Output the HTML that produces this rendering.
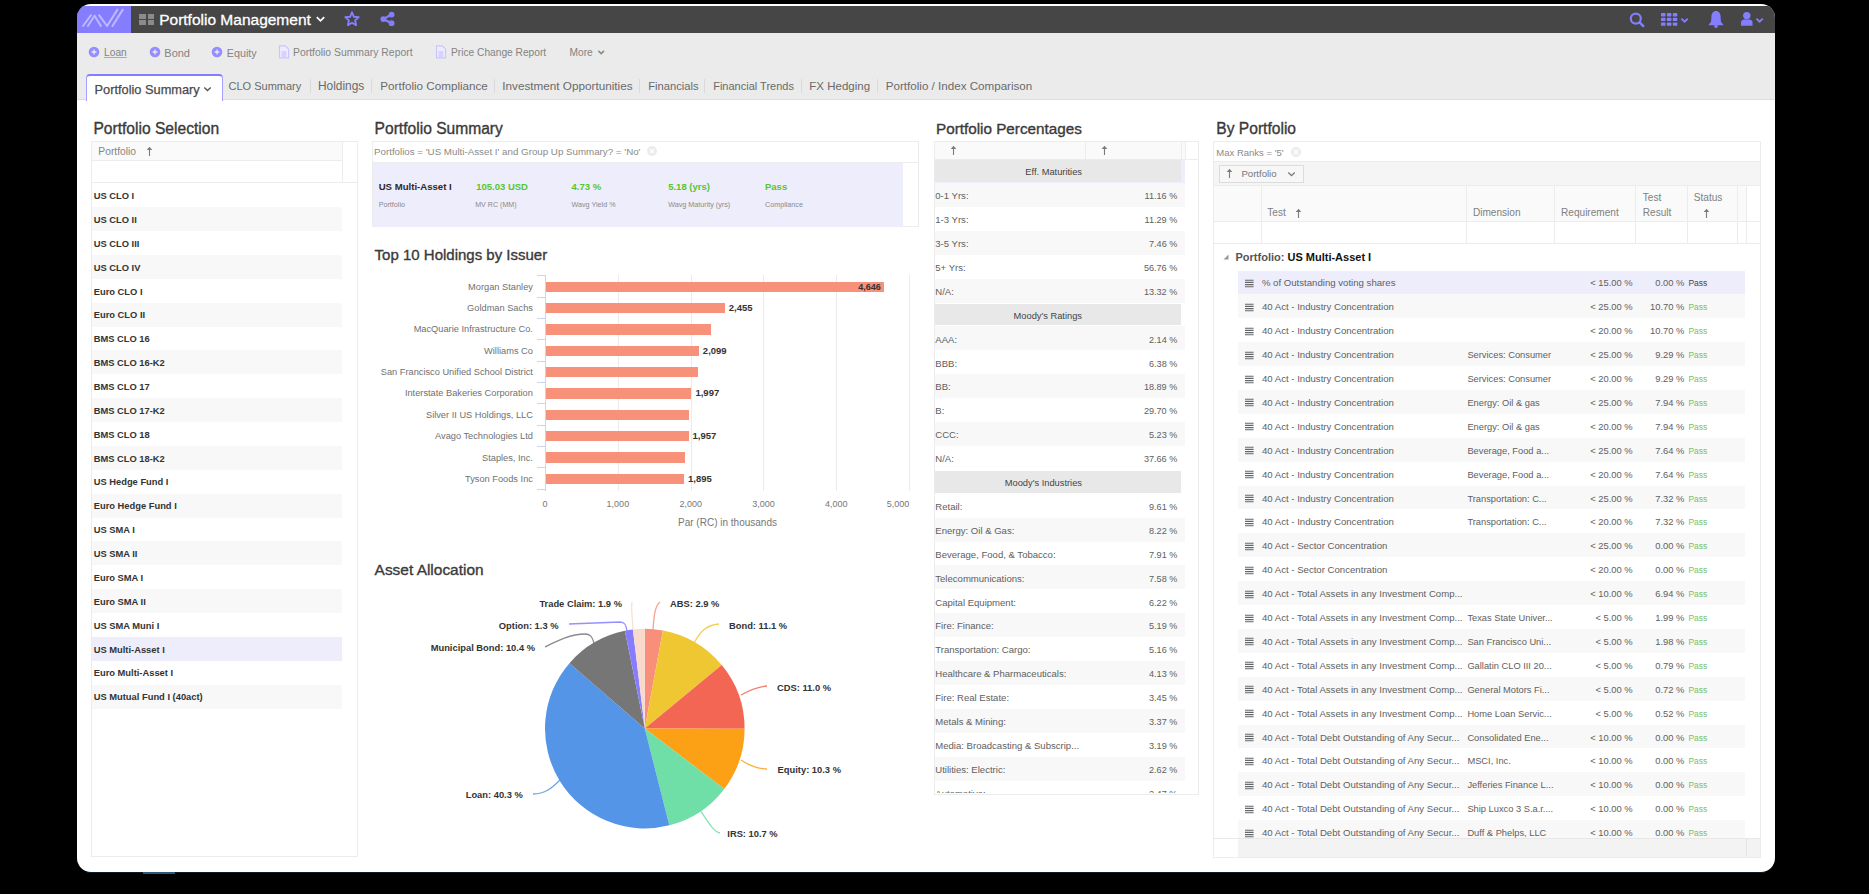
<!DOCTYPE html>
<html><head><meta charset="utf-8"><style>
html,body{margin:0;padding:0;}
body{width:1869px;height:894px;background:#000;position:relative;overflow:hidden;font-family:"Liberation Sans", sans-serif;}
#win{position:absolute;left:77px;top:4px;width:1698px;height:868px;border-radius:14px;background:#fff;overflow:hidden;}
#win div{position:absolute;}
.t{white-space:nowrap;line-height:20px;height:20px;}
</style></head><body>
<div style="position:absolute;left:87px;top:872px;width:1678px;height:1px;background:#0d1c26;"></div><div style="position:absolute;left:143px;top:872px;width:32px;height:1.5px;background:#2a5a78;"></div>
<div id="win"><div style="left:-77px;top:-4px;width:1869px;height:894px;">
<div style="left:77.00px;top:6.00px;width:1698.00px;height:26.70px;background:#464646;"></div>
<div style="left:77.00px;top:6.00px;width:53.60px;height:26.70px;background:#847dfe;"></div>
<svg style="position:absolute;left:77.00px;top:4.00px;" width="54" height="29" viewBox="0 0 54 29"><g stroke="#bdb8ff" stroke-width="2" fill="none" stroke-linecap="round" stroke-linejoin="round"><path d="M6 22 L14 11.2"/><path d="M10.9 22 L17.6 11.7 L23.9 22"/><path d="M22.1 11.2 L30.1 22 L40.4 5.6"/><path d="M35.5 22 L45.8 5.6"/></g></svg>
<div style="left:139.30px;top:13.70px;width:6.60px;height:5.00px;background:#8b8b8b;"></div>
<div style="left:139.30px;top:19.90px;width:6.60px;height:5.00px;background:#8b8b8b;"></div>
<div style="left:147.50px;top:13.70px;width:6.60px;height:5.00px;background:#8b8b8b;"></div>
<div style="left:147.50px;top:19.90px;width:6.60px;height:5.00px;background:#8b8b8b;"></div>
<div class="t" style="left:159.20px;top:9.60px;font-size:15.5px;color:#ffffff;font-weight:normal;-webkit-text-stroke:0.3px #fff;">Portfolio Management</div>
<svg style="position:absolute;left:315.00px;top:15.00px;" width="11" height="8" viewBox="0 0 11 8"><path d="M1.8 2.2 L5.5 5.8 L9.2 2.2" stroke="#fff" stroke-width="1.8" fill="none"/></svg>
<svg style="position:absolute;left:343.00px;top:10.00px;" width="18" height="18" viewBox="0 0 18 18"><path d="M9 2.3 L10.9 6.8 L15.7 7.2 L12.1 10.4 L13.1 15.1 L9 12.7 L4.9 15.1 L5.9 10.4 L2.3 7.2 L7.1 6.8 Z" stroke="#847dfe" stroke-width="1.9" fill="none" stroke-linejoin="round"/></svg>
<svg style="position:absolute;left:380.00px;top:11.00px;" width="17" height="17" viewBox="0 0 17 17"><g fill="#847dfe"><circle cx="11.6" cy="3.6" r="2.9"/><circle cx="11.6" cy="12.2" r="2.9"/><circle cx="3.3" cy="8.1" r="2.9"/></g><path d="M11.6 3.6 L3.3 8.1 L11.6 12.2" stroke="#847dfe" stroke-width="2.3" fill="none"/></svg>
<svg style="position:absolute;left:1627.00px;top:11.00px;" width="19" height="19" viewBox="0 0 19 19"><circle cx="8.8" cy="7.6" r="5.0" stroke="#847dfe" stroke-width="2.2" fill="none"/><path d="M12.6 11.4 L16.3 15.1" stroke="#847dfe" stroke-width="2.4" stroke-linecap="round"/></svg>
<svg style="position:absolute;left:1661.00px;top:13.20px;" width="17" height="14" viewBox="0 0 17 14"><g fill="#847dfe"><rect x="0.0" y="0.0" width="4.5" height="3.4" rx="0.9"/><rect x="0.0" y="4.7" width="4.5" height="3.4" rx="0.9"/><rect x="0.0" y="9.4" width="4.5" height="3.4" rx="0.9"/><rect x="5.9" y="0.0" width="4.5" height="3.4" rx="0.9"/><rect x="5.9" y="4.7" width="4.5" height="3.4" rx="0.9"/><rect x="5.9" y="9.4" width="4.5" height="3.4" rx="0.9"/><rect x="11.8" y="0.0" width="4.5" height="3.4" rx="0.9"/><rect x="11.8" y="4.7" width="4.5" height="3.4" rx="0.9"/><rect x="11.8" y="9.4" width="4.5" height="3.4" rx="0.9"/></g></svg>
<svg style="position:absolute;left:1679.80px;top:16.60px;" width="10" height="7" viewBox="0 0 10 7"><path d="M1.4 1.6 L4.6 4.6 L7.8 1.6" stroke="#847dfe" stroke-width="1.9" fill="none"/></svg>
<svg style="position:absolute;left:1707.00px;top:10.00px;" width="18" height="19" viewBox="0 0 18 19"><path d="M9 1.1 C6 1.1 4.6 3.6 4.4 6.5 L4.2 10.6 C4 12.2 2.9 13.4 1.8 14.4 L1.8 15.3 H16.2 V14.4 C15.1 13.4 14 12.2 13.8 10.6 L13.6 6.5 C13.4 3.6 12 1.1 9 1.1 Z" fill="#847dfe"/><circle cx="9" cy="16.3" r="1.7" fill="#847dfe"/></svg>
<svg style="position:absolute;left:1740.00px;top:11.00px;" width="15" height="17" viewBox="0 0 15 17"><circle cx="6.8" cy="4.6" r="3.7" fill="#847dfe"/><path d="M1 14.7 V11.4 C1 9.5 2.5 8.4 4.3 8.4 H9.3 C11.1 8.4 12.5 9.5 12.5 11.4 V14.7 Z" fill="#847dfe"/></svg>
<svg style="position:absolute;left:1755.00px;top:16.60px;" width="10" height="7" viewBox="0 0 10 7"><path d="M1.4 1.6 L4.6 4.6 L7.8 1.6" stroke="#847dfe" stroke-width="1.9" fill="none"/></svg>
<div style="left:77.00px;top:32.70px;width:1698.00px;height:67.30px;background:#ebebeb;"></div>
<div style="left:77.00px;top:99.20px;width:1698.00px;height:1.00px;background:#dcdcdc;"></div>
<svg style="position:absolute;left:88.30px;top:45.70px;" width="12" height="12" viewBox="0 0 12 12"><circle cx="6" cy="6" r="5.3" fill="#948dff"/><path d="M6 3.6 V8.4 M3.6 6 H8.4" stroke="#ececec" stroke-width="1.3"/></svg>
<div class="t" style="left:104.10px;top:42.80px;font-size:10.2px;color:#838383;font-weight:normal;text-decoration:underline;text-decoration-color:#aaa;">Loan</div>
<svg style="position:absolute;left:148.50px;top:45.70px;" width="12" height="12" viewBox="0 0 12 12"><circle cx="6" cy="6" r="5.3" fill="#948dff"/><path d="M6 3.6 V8.4 M3.6 6 H8.4" stroke="#ececec" stroke-width="1.3"/></svg>
<div class="t" style="left:164.30px;top:42.80px;font-size:11.0px;color:#838383;font-weight:normal;">Bond</div>
<svg style="position:absolute;left:210.80px;top:45.70px;" width="12" height="12" viewBox="0 0 12 12"><circle cx="6" cy="6" r="5.3" fill="#948dff"/><path d="M6 3.6 V8.4 M3.6 6 H8.4" stroke="#ececec" stroke-width="1.3"/></svg>
<div class="t" style="left:226.70px;top:42.80px;font-size:10.8px;color:#838383;font-weight:normal;">Equity</div>
<svg style="position:absolute;left:278.00px;top:44.70px;" width="12" height="14" viewBox="0 0 12 14"><path d="M1.5 0.9 H7.3 L10.6 4.2 V12.9 H1.5 Z" stroke="#c9c5ff" stroke-width="1.1" fill="#eeebff"/><path d="M3.6 7 H8.4 M3.6 9 H8.4 M3.6 11 H8.4" stroke="#b9b4ff" stroke-width="0.9"/></svg>
<div class="t" style="left:293.00px;top:42.80px;font-size:10.4px;color:#838383;font-weight:normal;">Portfolio Summary Report</div>
<svg style="position:absolute;left:435.20px;top:44.70px;" width="12" height="14" viewBox="0 0 12 14"><path d="M1.5 0.9 H7.3 L10.6 4.2 V12.9 H1.5 Z" stroke="#c9c5ff" stroke-width="1.1" fill="#eeebff"/><path d="M3.6 7 H8.4 M3.6 9 H8.4 M3.6 11 H8.4" stroke="#b9b4ff" stroke-width="0.9"/></svg>
<div class="t" style="left:451.00px;top:42.80px;font-size:10.2px;color:#838383;font-weight:normal;">Price Change Report</div>
<div class="t" style="left:569.50px;top:42.80px;font-size:10.2px;color:#838383;font-weight:normal;">More</div>
<svg style="position:absolute;left:596.80px;top:48.50px;" width="9" height="7" viewBox="0 0 9 7"><path d="M1.4 1.9 L4.2 4.6 L7 1.9" stroke="#8a8a8a" stroke-width="1.6" fill="none"/></svg>
<div style="left:86.00px;top:73.60px;width:136.50px;height:27.00px;background:#ffffff;border:1.3px solid #a59fff;border-top:2.2px solid #847dfe;border-bottom:none;border-radius:4px 4px 0 0;box-sizing:border-box;"></div>
<div class="t" style="left:94.50px;top:79.60px;font-size:12.8px;color:#4a4a4a;font-weight:normal;-webkit-text-stroke:0.25px #4a4a4a;">Portfolio Summary</div>
<svg style="position:absolute;left:203.00px;top:86.00px;" width="10" height="7" viewBox="0 0 10 7"><path d="M1.3 1.5 L4.5 4.6 L7.7 1.5" stroke="#555" stroke-width="1.4" fill="none"/></svg>
<div class="t" style="left:228.50px;top:76.30px;font-size:11.0px;color:#6a6a6a;font-weight:normal;">CLO Summary</div>
<div class="t" style="left:318.00px;top:76.30px;font-size:11.9px;color:#6a6a6a;font-weight:normal;">Holdings</div>
<div class="t" style="left:380.30px;top:76.30px;font-size:11.66px;color:#6a6a6a;font-weight:normal;">Portfolio Compliance</div>
<div class="t" style="left:502.30px;top:76.30px;font-size:11.72px;color:#6a6a6a;font-weight:normal;">Investment Opportunities</div>
<div class="t" style="left:648.20px;top:76.30px;font-size:11.2px;color:#6a6a6a;font-weight:normal;">Financials</div>
<div class="t" style="left:713.20px;top:76.30px;font-size:11.0px;color:#6a6a6a;font-weight:normal;">Financial Trends</div>
<div class="t" style="left:809.30px;top:76.30px;font-size:11.5px;color:#6a6a6a;font-weight:normal;">FX Hedging</div>
<div class="t" style="left:885.80px;top:76.30px;font-size:11.62px;color:#6a6a6a;font-weight:normal;">Portfolio / Index Comparison</div>
<div style="left:309.50px;top:79.00px;width:1.00px;height:14.00px;background:#dadada;"></div>
<div style="left:371.30px;top:79.00px;width:1.00px;height:14.00px;background:#dadada;"></div>
<div style="left:494.20px;top:79.00px;width:1.00px;height:14.00px;background:#dadada;"></div>
<div style="left:639.30px;top:79.00px;width:1.00px;height:14.00px;background:#dadada;"></div>
<div style="left:704.20px;top:79.00px;width:1.00px;height:14.00px;background:#dadada;"></div>
<div style="left:801.00px;top:79.00px;width:1.00px;height:14.00px;background:#dadada;"></div>
<div style="left:876.80px;top:79.00px;width:1.00px;height:14.00px;background:#dadada;"></div>
<div class="t" style="left:93.40px;top:119.00px;font-size:15.6px;color:#3a3a3a;font-weight:normal;-webkit-text-stroke:0.35px #3a3a3a;">Portfolio Selection</div>
<div class="t" style="left:374.60px;top:119.00px;font-size:15.6px;color:#3a3a3a;font-weight:normal;-webkit-text-stroke:0.35px #3a3a3a;">Portfolio Summary</div>
<div class="t" style="left:936.00px;top:119.00px;font-size:15.25px;color:#3a3a3a;font-weight:normal;-webkit-text-stroke:0.35px #3a3a3a;">Portfolio Percentages</div>
<div class="t" style="left:1216.30px;top:119.00px;font-size:15.6px;color:#3a3a3a;font-weight:normal;-webkit-text-stroke:0.35px #3a3a3a;">By Portfolio</div>
<div style="left:91.30px;top:141.00px;width:266.50px;height:716.00px;background:#fff;border:1px solid #ececec;box-sizing:border-box;"></div>
<div style="left:92.30px;top:142.00px;width:249.50px;height:18.00px;background:#fafafa;"></div>
<div style="left:92.30px;top:159.50px;width:249.50px;height:1.00px;background:#ececec;"></div>
<div style="left:341.80px;top:142.00px;width:1.00px;height:40.50px;background:#ececec;"></div>
<div style="left:92.30px;top:182.20px;width:265.00px;height:1.00px;background:#ececec;"></div>
<div class="t" style="left:98.30px;top:142.20px;font-size:10.3px;color:#858585;font-weight:normal;">Portfolio</div>
<svg style="position:absolute;left:144.50px;top:145.00px;" width="9" height="12" viewBox="0 0 9 12"><path d="M4.5 3 V11" stroke="#7a7a7a" stroke-width="1.1" fill="none"/><path d="M1.7 4.9 L4.5 1.8 L7.3 4.9 Z" fill="#7a7a7a"/></svg>
<div class="t" style="left:93.70px;top:186.03px;font-size:9.35px;color:#333;font-weight:bold;">US CLO I</div>
<div style="left:92.00px;top:207.27px;width:249.80px;height:23.87px;background:#f8f8f8;"></div>
<div class="t" style="left:93.70px;top:209.91px;font-size:9.35px;color:#333;font-weight:bold;">US CLO II</div>
<div class="t" style="left:93.70px;top:233.78px;font-size:9.35px;color:#333;font-weight:bold;">US CLO III</div>
<div style="left:92.00px;top:255.01px;width:249.80px;height:23.87px;background:#f8f8f8;"></div>
<div class="t" style="left:93.70px;top:257.64px;font-size:9.35px;color:#333;font-weight:bold;">US CLO IV</div>
<div class="t" style="left:93.70px;top:281.51px;font-size:9.35px;color:#333;font-weight:bold;">Euro CLO I</div>
<div style="left:92.00px;top:302.75px;width:249.80px;height:23.87px;background:#f8f8f8;"></div>
<div class="t" style="left:93.70px;top:305.38px;font-size:9.35px;color:#333;font-weight:bold;">Euro CLO II</div>
<div class="t" style="left:93.70px;top:329.25px;font-size:9.35px;color:#333;font-weight:bold;">BMS CLO 16</div>
<div style="left:92.00px;top:350.49px;width:249.80px;height:23.87px;background:#f8f8f8;"></div>
<div class="t" style="left:93.70px;top:353.12px;font-size:9.35px;color:#333;font-weight:bold;">BMS CLO 16-K2</div>
<div class="t" style="left:93.70px;top:377.00px;font-size:9.35px;color:#333;font-weight:bold;">BMS CLO 17</div>
<div style="left:92.00px;top:398.23px;width:249.80px;height:23.87px;background:#f8f8f8;"></div>
<div class="t" style="left:93.70px;top:400.87px;font-size:9.35px;color:#333;font-weight:bold;">BMS CLO 17-K2</div>
<div class="t" style="left:93.70px;top:424.74px;font-size:9.35px;color:#333;font-weight:bold;">BMS CLO 18</div>
<div style="left:92.00px;top:445.97px;width:249.80px;height:23.87px;background:#f8f8f8;"></div>
<div class="t" style="left:93.70px;top:448.61px;font-size:9.35px;color:#333;font-weight:bold;">BMS CLO 18-K2</div>
<div class="t" style="left:93.70px;top:472.48px;font-size:9.35px;color:#333;font-weight:bold;">US Hedge Fund I</div>
<div style="left:92.00px;top:493.71px;width:249.80px;height:23.87px;background:#f8f8f8;"></div>
<div class="t" style="left:93.70px;top:496.35px;font-size:9.35px;color:#333;font-weight:bold;">Euro Hedge Fund I</div>
<div class="t" style="left:93.70px;top:520.22px;font-size:9.35px;color:#333;font-weight:bold;">US SMA I</div>
<div style="left:92.00px;top:541.45px;width:249.80px;height:23.87px;background:#f8f8f8;"></div>
<div class="t" style="left:93.70px;top:544.09px;font-size:9.35px;color:#333;font-weight:bold;">US SMA II</div>
<div class="t" style="left:93.70px;top:567.96px;font-size:9.35px;color:#333;font-weight:bold;">Euro SMA I</div>
<div style="left:92.00px;top:589.19px;width:249.80px;height:23.87px;background:#f8f8f8;"></div>
<div class="t" style="left:93.70px;top:591.83px;font-size:9.35px;color:#333;font-weight:bold;">Euro SMA II</div>
<div class="t" style="left:93.70px;top:615.70px;font-size:9.35px;color:#333;font-weight:bold;">US SMA Muni I</div>
<div style="left:92.00px;top:636.93px;width:249.80px;height:23.87px;background:#eeedfc;"></div>
<div class="t" style="left:93.70px;top:639.57px;font-size:9.35px;color:#333;font-weight:bold;">US Multi-Asset I</div>
<div class="t" style="left:93.70px;top:663.44px;font-size:9.35px;color:#333;font-weight:bold;">Euro Multi-Asset I</div>
<div style="left:92.00px;top:684.67px;width:249.80px;height:23.87px;background:#f8f8f8;"></div>
<div class="t" style="left:93.70px;top:687.31px;font-size:9.35px;color:#333;font-weight:bold;">US Mutual Fund I (40act)</div>
<div style="left:371.60px;top:141.00px;width:547.10px;height:86.00px;background:#fff;border:1px solid #ececec;box-sizing:border-box;"></div>
<div class="t" style="left:374.00px;top:142.30px;font-size:9.75px;color:#8a8a8a;font-weight:normal;">Portfolios = 'US Multi-Asset I' and Group Up Summary? = 'No'</div>
<svg style="position:absolute;left:646.00px;top:145.00px;" width="12" height="12" viewBox="0 0 12 12"><circle cx="6" cy="6" r="5" fill="#ececec"/><path d="M4 4 L8 8 M8 4 L4 8" stroke="#fff" stroke-width="1.2"/></svg>
<div style="left:371.60px;top:162.40px;width:547.10px;height:1.00px;background:#ececec;"></div>
<div style="left:372.60px;top:163.40px;width:530.20px;height:63.50px;background:#eeedfc;"></div>
<div class="t" style="left:378.70px;top:176.60px;font-size:9.6px;color:#2a2a2a;font-weight:bold;">US Multi-Asset I</div>
<div class="t" style="left:476.20px;top:176.60px;font-size:9.5px;color:#55c62e;font-weight:bold;">105.03 USD</div>
<div class="t" style="left:571.50px;top:176.60px;font-size:9.5px;color:#55c62e;font-weight:bold;">4.73 %</div>
<div class="t" style="left:668.20px;top:176.60px;font-size:9.5px;color:#55c62e;font-weight:bold;">5.18 (yrs)</div>
<div class="t" style="left:765.00px;top:176.60px;font-size:9.5px;color:#55c62e;font-weight:bold;">Pass</div>
<div class="t" style="left:378.70px;top:194.70px;font-size:7.2px;color:#8a8a8a;font-weight:normal;">Portfolio</div>
<div class="t" style="left:475.20px;top:194.70px;font-size:7.1px;color:#8a8a8a;font-weight:normal;">MV RC (MM)</div>
<div class="t" style="left:571.50px;top:194.70px;font-size:7.2px;color:#8a8a8a;font-weight:normal;">Wavg Yield %</div>
<div class="t" style="left:668.20px;top:194.70px;font-size:7.2px;color:#8a8a8a;font-weight:normal;">Wavg Maturity (yrs)</div>
<div class="t" style="left:765.00px;top:194.70px;font-size:7.2px;color:#8a8a8a;font-weight:normal;">Compliance</div>
<div class="t" style="left:374.60px;top:245.00px;font-size:15.0px;color:#3a3a3a;font-weight:normal;-webkit-text-stroke:0.35px #3a3a3a;">Top 10 Holdings by Issuer</div>
<div class="t" style="left:245.10px;width:600px;text-align:center;top:493.50px;font-size:9.0px;color:#777;font-weight:normal;">0</div>
<div style="left:617.88px;top:275.30px;width:1.00px;height:216.00px;background:#ebebeb;"></div>
<div class="t" style="left:317.88px;width:600px;text-align:center;top:493.50px;font-size:9.0px;color:#777;font-weight:normal;">1,000</div>
<div style="left:690.66px;top:275.30px;width:1.00px;height:216.00px;background:#ebebeb;"></div>
<div class="t" style="left:390.66px;width:600px;text-align:center;top:493.50px;font-size:9.0px;color:#777;font-weight:normal;">2,000</div>
<div style="left:763.44px;top:275.30px;width:1.00px;height:216.00px;background:#ebebeb;"></div>
<div class="t" style="left:463.44px;width:600px;text-align:center;top:493.50px;font-size:9.0px;color:#777;font-weight:normal;">3,000</div>
<div style="left:836.22px;top:275.30px;width:1.00px;height:216.00px;background:#ebebeb;"></div>
<div class="t" style="left:536.22px;width:600px;text-align:center;top:493.50px;font-size:9.0px;color:#777;font-weight:normal;">4,000</div>
<div style="left:909.00px;top:275.30px;width:1.00px;height:216.00px;background:#ebebeb;"></div>
<div class="t" style="left:598.00px;width:600px;text-align:center;top:493.50px;font-size:9.0px;color:#777;font-weight:normal;">5,000</div>
<div style="left:545.10px;top:275.30px;width:1.00px;height:216.00px;background:#ccd6eb;"></div>
<div style="left:546.10px;top:281.50px;width:338.14px;height:10.40px;background:#f8917a;"></div>
<div class="t" style="left:-67.10px;width:600px;text-align:right;top:276.70px;font-size:9.25px;color:#707070;font-weight:normal;">Morgan Stanley</div>
<div class="t" style="left:280.74px;width:600px;text-align:right;top:276.70px;font-size:9.0px;color:#333;font-weight:bold;">4,646</div>
<div style="left:546.10px;top:302.85px;width:178.67px;height:10.40px;background:#f8917a;"></div>
<div class="t" style="left:-67.10px;width:600px;text-align:right;top:298.05px;font-size:9.25px;color:#707070;font-weight:normal;">Goldman Sachs</div>
<div class="t" style="left:728.77px;top:298.05px;font-size:9.5px;color:#333;font-weight:bold;">2,455</div>
<div style="left:546.10px;top:324.20px;width:165.14px;height:10.40px;background:#f8917a;"></div>
<div class="t" style="left:-67.10px;width:600px;text-align:right;top:319.40px;font-size:9.25px;color:#707070;font-weight:normal;">MacQuarie Infrastructure Co.</div>
<div style="left:546.10px;top:345.55px;width:152.77px;height:10.40px;background:#f8917a;"></div>
<div class="t" style="left:-67.10px;width:600px;text-align:right;top:340.75px;font-size:9.25px;color:#707070;font-weight:normal;">Williams Co</div>
<div class="t" style="left:702.87px;top:340.75px;font-size:9.5px;color:#333;font-weight:bold;">2,099</div>
<div style="left:546.10px;top:366.90px;width:151.46px;height:10.40px;background:#f8917a;"></div>
<div class="t" style="left:-67.10px;width:600px;text-align:right;top:362.10px;font-size:9.25px;color:#707070;font-weight:normal;">San Francisco Unified School District</div>
<div style="left:546.10px;top:388.25px;width:145.34px;height:10.40px;background:#f8917a;"></div>
<div class="t" style="left:-67.10px;width:600px;text-align:right;top:383.45px;font-size:9.25px;color:#707070;font-weight:normal;">Interstate Bakeries Corporation</div>
<div class="t" style="left:695.44px;top:383.45px;font-size:9.5px;color:#333;font-weight:bold;">1,997</div>
<div style="left:546.10px;top:409.60px;width:142.94px;height:10.40px;background:#f8917a;"></div>
<div class="t" style="left:-67.10px;width:600px;text-align:right;top:404.80px;font-size:9.25px;color:#707070;font-weight:normal;">Silver II US Holdings, LLC</div>
<div style="left:546.10px;top:430.95px;width:142.43px;height:10.40px;background:#f8917a;"></div>
<div class="t" style="left:-67.10px;width:600px;text-align:right;top:426.15px;font-size:9.25px;color:#707070;font-weight:normal;">Avago Technologies Ltd</div>
<div class="t" style="left:692.53px;top:426.15px;font-size:9.5px;color:#333;font-weight:bold;">1,957</div>
<div style="left:546.10px;top:452.30px;width:138.86px;height:10.40px;background:#f8917a;"></div>
<div class="t" style="left:-67.10px;width:600px;text-align:right;top:447.50px;font-size:9.25px;color:#707070;font-weight:normal;">Staples, Inc.</div>
<div style="left:546.10px;top:473.65px;width:137.92px;height:10.40px;background:#f8917a;"></div>
<div class="t" style="left:-67.10px;width:600px;text-align:right;top:468.85px;font-size:9.25px;color:#707070;font-weight:normal;">Tyson Foods Inc</div>
<div class="t" style="left:688.02px;top:468.85px;font-size:9.5px;color:#333;font-weight:bold;">1,895</div>
<div style="left:536.50px;top:275.30px;width:9.00px;height:1.00px;background:#ccd6eb;"></div>
<div style="left:536.50px;top:296.65px;width:9.00px;height:1.00px;background:#ccd6eb;"></div>
<div style="left:536.50px;top:318.00px;width:9.00px;height:1.00px;background:#ccd6eb;"></div>
<div style="left:536.50px;top:339.35px;width:9.00px;height:1.00px;background:#ccd6eb;"></div>
<div style="left:536.50px;top:360.70px;width:9.00px;height:1.00px;background:#ccd6eb;"></div>
<div style="left:536.50px;top:382.05px;width:9.00px;height:1.00px;background:#ccd6eb;"></div>
<div style="left:536.50px;top:403.40px;width:9.00px;height:1.00px;background:#ccd6eb;"></div>
<div style="left:536.50px;top:424.75px;width:9.00px;height:1.00px;background:#ccd6eb;"></div>
<div style="left:536.50px;top:446.10px;width:9.00px;height:1.00px;background:#ccd6eb;"></div>
<div style="left:536.50px;top:467.45px;width:9.00px;height:1.00px;background:#ccd6eb;"></div>
<div style="left:536.50px;top:488.80px;width:9.00px;height:1.00px;background:#ccd6eb;"></div>
<div class="t" style="left:427.50px;width:600px;text-align:center;top:512.70px;font-size:10.0px;color:#777;font-weight:normal;">Par (RC) in thousands</div>
<div class="t" style="left:374.60px;top:559.50px;font-size:15.45px;color:#3a3a3a;font-weight:normal;-webkit-text-stroke:0.35px #3a3a3a;">Asset Allocation</div>
<svg style="position:absolute;left:0.00px;top:0.00px;pointer-events:none;" width="1869" height="894" viewBox="0 0 1869 894"><path d="M644.8 728.6 L644.80 628.80 A99.8 99.8 0 0 1 662.90 630.46 Z" fill="#f88f7a" stroke="none"/><path d="M644.8 728.6 L662.90 630.46 A99.8 99.8 0 0 1 721.75 665.05 Z" fill="#efc732" stroke="none"/><path d="M644.8 728.6 L721.75 665.05 A99.8 99.8 0 0 1 744.60 728.76 Z" fill="#f46654" stroke="none"/><path d="M644.8 728.6 L744.60 728.76 A99.8 99.8 0 0 1 724.29 788.95 Z" fill="#fca016" stroke="none"/><path d="M644.8 728.6 L724.29 788.95 A99.8 99.8 0 0 1 669.34 825.34 Z" fill="#6fdea7" stroke="none"/><path d="M644.8 728.6 L669.34 825.34 A99.8 99.8 0 0 1 569.47 663.14 Z" fill="#5495e7" stroke="none"/><path d="M644.8 728.6 L569.47 663.14 A99.8 99.8 0 0 1 624.85 630.81 Z" fill="#767676" stroke="none"/><path d="M644.8 728.6 L624.85 630.81 A99.8 99.8 0 0 1 632.90 629.51 Z" fill="#857dfe" stroke="none"/><path d="M644.8 728.6 L632.90 629.51 A99.8 99.8 0 0 1 644.80 628.80 Z" fill="#f8d9cc" stroke="none"/></svg>
<div class="t" style="left:280.70px;width:600px;text-align:center;top:593.80px;font-size:9.35px;color:#333;font-weight:bold;">Trade Claim: 1.9 %</div>
<div class="t" style="left:670.00px;top:593.80px;font-size:9.35px;color:#333;font-weight:bold;">ABS: 2.9 %</div>
<div class="t" style="left:729.00px;top:615.80px;font-size:9.35px;color:#333;font-weight:bold;">Bond: 11.1 %</div>
<div class="t" style="left:777.00px;top:677.80px;font-size:9.35px;color:#333;font-weight:bold;">CDS: 11.0 %</div>
<div class="t" style="left:777.60px;top:759.80px;font-size:9.35px;color:#333;font-weight:bold;">Equity: 10.3 %</div>
<div class="t" style="left:727.30px;top:824.20px;font-size:9.35px;color:#333;font-weight:bold;">IRS: 10.7 %</div>
<div class="t" style="left:-77.20px;width:600px;text-align:right;top:785.40px;font-size:9.35px;color:#333;font-weight:bold;">Loan: 40.3 %</div>
<div class="t" style="left:-65.00px;width:600px;text-align:right;top:637.80px;font-size:9.35px;color:#333;font-weight:bold;">Municipal Bond: 10.4 %</div>
<div class="t" style="left:-41.50px;width:600px;text-align:right;top:615.80px;font-size:9.35px;color:#333;font-weight:bold;">Option: 1.3 %</div>
<svg style="position:absolute;left:0.00px;top:0.00px;pointer-events:none;" width="1869" height="894" viewBox="0 0 1869 894"><path d="M633 629 C632 615 631 606 632 602" stroke="#f8d9cc" stroke-width="1.3" fill="none" opacity="0.85"/><path d="M653 629.5 C654 615 655 606 660 602" stroke="#f88f7a" stroke-width="1.3" fill="none" opacity="0.85"/><path d="M694 643 C700 632 706 625 719 624" stroke="#efc732" stroke-width="1.3" fill="none" opacity="0.85"/><path d="M741 695 C750 690 758 687 767 686" stroke="#f46654" stroke-width="1.3" fill="none" opacity="0.85"/><path d="M741 760 C750 766 758 769 767 769" stroke="#fca016" stroke-width="1.3" fill="none" opacity="0.85"/><path d="M700 810 C708 822 714 832 720 833" stroke="#6fdea7" stroke-width="1.3" fill="none" opacity="0.85"/><path d="M560 780 C552 788 545 794 533 794" stroke="#5495e7" stroke-width="1.3" fill="none" opacity="0.85"/><path d="M594 643 C592 636 590 634 585 634 C570 634 555 642 545 647" stroke="#767676" stroke-width="1.3" fill="none" opacity="0.85"/><path d="M627 631 C626 625 625 622 620 622 L569 624" stroke="#857dfe" stroke-width="1.3" fill="none" opacity="0.85"/></svg>
<div style="left:933.60px;top:141.30px;width:265.80px;height:654.00px;background:#fff;border:1px solid #ececec;box-sizing:border-box;"></div>
<div style="left:934.60px;top:142.30px;width:250.00px;height:17.00px;background:#fafafa;"></div>
<div style="left:933.60px;top:159.20px;width:265.80px;height:1.00px;background:#ececec;"></div>
<div style="left:1084.50px;top:142.00px;width:1.00px;height:17.00px;background:#ececec;"></div>
<div style="left:1180.50px;top:142.00px;width:1.00px;height:17.00px;background:#ececec;"></div>
<div style="left:1184.70px;top:142.00px;width:1.00px;height:17.00px;background:#ececec;"></div>
<svg style="position:absolute;left:949.00px;top:144.00px;" width="9" height="12" viewBox="0 0 9 12"><path d="M4.5 3 V11" stroke="#7a7a7a" stroke-width="1.1" fill="none"/><path d="M1.7 4.9 L4.5 1.8 L7.3 4.9 Z" fill="#7a7a7a"/></svg>
<svg style="position:absolute;left:1099.50px;top:144.00px;" width="9" height="12" viewBox="0 0 9 12"><path d="M4.5 3 V11" stroke="#7a7a7a" stroke-width="1.1" fill="none"/><path d="M1.7 4.9 L4.5 1.8 L7.3 4.9 Z" fill="#7a7a7a"/></svg>
<div style="left:934.6px;top:160.2px;width:264px;height:633px;overflow:hidden;">
<div style="left:0.00px;top:-1.00px;width:250.10px;height:23.90px;background:#eeedfc;"></div>
<div style="left:0.00px;top:0.20px;width:246.90px;height:21.70px;background:#e8e8e8;"></div>
<div class="t" style="left:-452.60px;width:600px;text-align:right;top:2.15px;font-size:9.3px;color:#444;font-weight:normal;">Eff. Maturities</div>
<div style="left:0.00px;top:22.90px;width:250.10px;height:23.90px;background:#f8f8f8;"></div>
<div class="t" style="left:0.70px;top:26.05px;font-size:9.55px;color:#606060;font-weight:normal;">0-1 Yrs:</div>
<div class="t" style="left:-357.30px;width:600px;text-align:right;top:26.05px;font-size:9.1px;color:#606060;font-weight:normal;">11.16 %</div>
<div class="t" style="left:0.70px;top:49.95px;font-size:9.55px;color:#606060;font-weight:normal;">1-3 Yrs:</div>
<div class="t" style="left:-357.30px;width:600px;text-align:right;top:49.95px;font-size:9.1px;color:#606060;font-weight:normal;">11.29 %</div>
<div style="left:0.00px;top:70.70px;width:250.10px;height:23.90px;background:#f8f8f8;"></div>
<div class="t" style="left:0.70px;top:73.85px;font-size:9.55px;color:#606060;font-weight:normal;">3-5 Yrs:</div>
<div class="t" style="left:-357.30px;width:600px;text-align:right;top:73.85px;font-size:9.1px;color:#606060;font-weight:normal;">7.46 %</div>
<div class="t" style="left:0.70px;top:97.75px;font-size:9.55px;color:#606060;font-weight:normal;">5+ Yrs:</div>
<div class="t" style="left:-357.30px;width:600px;text-align:right;top:97.75px;font-size:9.1px;color:#606060;font-weight:normal;">56.76 %</div>
<div style="left:0.00px;top:118.50px;width:250.10px;height:23.90px;background:#f8f8f8;"></div>
<div class="t" style="left:0.70px;top:121.65px;font-size:9.55px;color:#606060;font-weight:normal;">N/A:</div>
<div class="t" style="left:-357.30px;width:600px;text-align:right;top:121.65px;font-size:9.1px;color:#606060;font-weight:normal;">13.32 %</div>
<div style="left:0.00px;top:143.60px;width:246.90px;height:21.70px;background:#e8e8e8;"></div>
<div class="t" style="left:-452.60px;width:600px;text-align:right;top:145.55px;font-size:9.3px;color:#444;font-weight:normal;">Moody's Ratings</div>
<div style="left:0.00px;top:166.30px;width:250.10px;height:23.90px;background:#f8f8f8;"></div>
<div class="t" style="left:0.70px;top:169.45px;font-size:9.55px;color:#606060;font-weight:normal;">AAA:</div>
<div class="t" style="left:-357.30px;width:600px;text-align:right;top:169.45px;font-size:9.1px;color:#606060;font-weight:normal;">2.14 %</div>
<div class="t" style="left:0.70px;top:193.35px;font-size:9.55px;color:#606060;font-weight:normal;">BBB:</div>
<div class="t" style="left:-357.30px;width:600px;text-align:right;top:193.35px;font-size:9.1px;color:#606060;font-weight:normal;">6.38 %</div>
<div style="left:0.00px;top:214.10px;width:250.10px;height:23.90px;background:#f8f8f8;"></div>
<div class="t" style="left:0.70px;top:217.25px;font-size:9.55px;color:#606060;font-weight:normal;">BB:</div>
<div class="t" style="left:-357.30px;width:600px;text-align:right;top:217.25px;font-size:9.1px;color:#606060;font-weight:normal;">18.89 %</div>
<div class="t" style="left:0.70px;top:241.15px;font-size:9.55px;color:#606060;font-weight:normal;">B:</div>
<div class="t" style="left:-357.30px;width:600px;text-align:right;top:241.15px;font-size:9.1px;color:#606060;font-weight:normal;">29.70 %</div>
<div style="left:0.00px;top:261.90px;width:250.10px;height:23.90px;background:#f8f8f8;"></div>
<div class="t" style="left:0.70px;top:265.05px;font-size:9.55px;color:#606060;font-weight:normal;">CCC:</div>
<div class="t" style="left:-357.30px;width:600px;text-align:right;top:265.05px;font-size:9.1px;color:#606060;font-weight:normal;">5.23 %</div>
<div class="t" style="left:0.70px;top:288.95px;font-size:9.55px;color:#606060;font-weight:normal;">N/A:</div>
<div class="t" style="left:-357.30px;width:600px;text-align:right;top:288.95px;font-size:9.1px;color:#606060;font-weight:normal;">37.66 %</div>
<div style="left:0.00px;top:310.90px;width:246.90px;height:21.70px;background:#e8e8e8;"></div>
<div class="t" style="left:-452.60px;width:600px;text-align:right;top:312.85px;font-size:9.3px;color:#444;font-weight:normal;">Moody's Industries</div>
<div class="t" style="left:0.70px;top:336.75px;font-size:9.55px;color:#606060;font-weight:normal;">Retail:</div>
<div class="t" style="left:-357.30px;width:600px;text-align:right;top:336.75px;font-size:9.1px;color:#606060;font-weight:normal;">9.61 %</div>
<div style="left:0.00px;top:357.50px;width:250.10px;height:23.90px;background:#f8f8f8;"></div>
<div class="t" style="left:0.70px;top:360.65px;font-size:9.55px;color:#606060;font-weight:normal;">Energy: Oil &amp; Gas:</div>
<div class="t" style="left:-357.30px;width:600px;text-align:right;top:360.65px;font-size:9.1px;color:#606060;font-weight:normal;">8.22 %</div>
<div class="t" style="left:0.70px;top:384.55px;font-size:9.55px;color:#606060;font-weight:normal;">Beverage, Food, &amp; Tobacco:</div>
<div class="t" style="left:-357.30px;width:600px;text-align:right;top:384.55px;font-size:9.1px;color:#606060;font-weight:normal;">7.91 %</div>
<div style="left:0.00px;top:405.30px;width:250.10px;height:23.90px;background:#f8f8f8;"></div>
<div class="t" style="left:0.70px;top:408.45px;font-size:9.55px;color:#606060;font-weight:normal;">Telecommunications:</div>
<div class="t" style="left:-357.30px;width:600px;text-align:right;top:408.45px;font-size:9.1px;color:#606060;font-weight:normal;">7.58 %</div>
<div class="t" style="left:0.70px;top:432.35px;font-size:9.55px;color:#606060;font-weight:normal;">Capital Equipment:</div>
<div class="t" style="left:-357.30px;width:600px;text-align:right;top:432.35px;font-size:9.1px;color:#606060;font-weight:normal;">6.22 %</div>
<div style="left:0.00px;top:453.10px;width:250.10px;height:23.90px;background:#f8f8f8;"></div>
<div class="t" style="left:0.70px;top:456.25px;font-size:9.55px;color:#606060;font-weight:normal;">Fire: Finance:</div>
<div class="t" style="left:-357.30px;width:600px;text-align:right;top:456.25px;font-size:9.1px;color:#606060;font-weight:normal;">5.19 %</div>
<div class="t" style="left:0.70px;top:480.15px;font-size:9.55px;color:#606060;font-weight:normal;">Transportation: Cargo:</div>
<div class="t" style="left:-357.30px;width:600px;text-align:right;top:480.15px;font-size:9.1px;color:#606060;font-weight:normal;">5.16 %</div>
<div style="left:0.00px;top:500.90px;width:250.10px;height:23.90px;background:#f8f8f8;"></div>
<div class="t" style="left:0.70px;top:504.05px;font-size:9.55px;color:#606060;font-weight:normal;">Healthcare &amp; Pharmaceuticals:</div>
<div class="t" style="left:-357.30px;width:600px;text-align:right;top:504.05px;font-size:9.1px;color:#606060;font-weight:normal;">4.13 %</div>
<div class="t" style="left:0.70px;top:527.95px;font-size:9.55px;color:#606060;font-weight:normal;">Fire: Real Estate:</div>
<div class="t" style="left:-357.30px;width:600px;text-align:right;top:527.95px;font-size:9.1px;color:#606060;font-weight:normal;">3.45 %</div>
<div style="left:0.00px;top:548.70px;width:250.10px;height:23.90px;background:#f8f8f8;"></div>
<div class="t" style="left:0.70px;top:551.85px;font-size:9.55px;color:#606060;font-weight:normal;">Metals &amp; Mining:</div>
<div class="t" style="left:-357.30px;width:600px;text-align:right;top:551.85px;font-size:9.1px;color:#606060;font-weight:normal;">3.37 %</div>
<div class="t" style="left:0.70px;top:575.75px;font-size:9.55px;color:#606060;font-weight:normal;">Media: Broadcasting &amp; Subscrip...</div>
<div class="t" style="left:-357.30px;width:600px;text-align:right;top:575.75px;font-size:9.1px;color:#606060;font-weight:normal;">3.19 %</div>
<div style="left:0.00px;top:596.50px;width:250.10px;height:23.90px;background:#f8f8f8;"></div>
<div class="t" style="left:0.70px;top:599.65px;font-size:9.55px;color:#606060;font-weight:normal;">Utilities: Electric:</div>
<div class="t" style="left:-357.30px;width:600px;text-align:right;top:599.65px;font-size:9.1px;color:#606060;font-weight:normal;">2.62 %</div>
<div class="t" style="left:0.70px;top:623.55px;font-size:9.55px;color:#606060;font-weight:normal;">Automotive:</div>
<div class="t" style="left:-357.30px;width:600px;text-align:right;top:623.55px;font-size:9.1px;color:#606060;font-weight:normal;">2.47 %</div>
</div>
<div style="left:1213.40px;top:140.50px;width:548.00px;height:717.50px;background:#fff;border:1px solid #ececec;box-sizing:border-box;"></div>
<div class="t" style="left:1216.30px;top:142.60px;font-size:9.5px;color:#8a8a8a;font-weight:normal;">Max Ranks = '5'</div>
<svg style="position:absolute;left:1289.50px;top:146.30px;" width="12" height="12" viewBox="0 0 12 12"><circle cx="6" cy="6" r="5" fill="#ececec"/><path d="M4 4 L8 8 M8 4 L4 8" stroke="#fff" stroke-width="1.2"/></svg>
<div style="left:1214.40px;top:160.50px;width:546.00px;height:25.20px;background:#f5f5f5;"></div>
<div style="left:1213.40px;top:160.50px;width:548.00px;height:1.00px;background:#ececec;"></div>
<div style="left:1213.40px;top:185.20px;width:548.00px;height:1.00px;background:#ececec;"></div>
<div style="left:1218.60px;top:164.50px;width:85.80px;height:18.80px;background:#f7f7f7;border:1px solid #dcdcdc;box-sizing:border-box;"></div>
<svg style="position:absolute;left:1225.20px;top:167.00px;" width="9" height="12" viewBox="0 0 9 12"><path d="M4.5 3 V11" stroke="#7a7a7a" stroke-width="1.1" fill="none"/><path d="M1.7 4.9 L4.5 1.8 L7.3 4.9 Z" fill="#7a7a7a"/></svg>
<div class="t" style="left:1241.40px;top:164.20px;font-size:9.6px;color:#777;font-weight:normal;">Portfolio</div>
<svg style="position:absolute;left:1287.00px;top:170.50px;" width="10" height="7" viewBox="0 0 10 7"><path d="M1.3 1.5 L4.5 4.6 L7.7 1.5" stroke="#777" stroke-width="1.3" fill="none"/></svg>
<div style="left:1214.40px;top:186.00px;width:531.80px;height:35.10px;background:#fafafa;"></div>
<div style="left:1260.50px;top:186.00px;width:1.00px;height:57.50px;background:#ececec;"></div>
<div style="left:1466.00px;top:186.00px;width:1.00px;height:57.50px;background:#ececec;"></div>
<div style="left:1553.90px;top:186.00px;width:1.00px;height:57.50px;background:#ececec;"></div>
<div style="left:1635.20px;top:186.00px;width:1.00px;height:57.50px;background:#ececec;"></div>
<div style="left:1686.50px;top:186.00px;width:1.00px;height:57.50px;background:#ececec;"></div>
<div style="left:1736.80px;top:186.00px;width:1.00px;height:57.50px;background:#ececec;"></div>
<div style="left:1746.20px;top:186.00px;width:1.00px;height:57.50px;background:#ececec;"></div>
<div style="left:1213.40px;top:221.10px;width:548.00px;height:1.00px;background:#ececec;"></div>
<div style="left:1213.40px;top:243.20px;width:548.00px;height:1.00px;background:#ececec;"></div>
<div class="t" style="left:1267.30px;top:203.40px;font-size:10.1px;color:#808080;font-weight:normal;">Test</div>
<svg style="position:absolute;left:1293.50px;top:207.00px;" width="9" height="12" viewBox="0 0 9 12"><path d="M4.5 3 V11" stroke="#7a7a7a" stroke-width="1.1" fill="none"/><path d="M1.7 4.9 L4.5 1.8 L7.3 4.9 Z" fill="#7a7a7a"/></svg>
<div class="t" style="left:1472.90px;top:203.40px;font-size:10.1px;color:#808080;font-weight:normal;">Dimension</div>
<div class="t" style="left:1561.00px;top:203.40px;font-size:10.1px;color:#808080;font-weight:normal;">Requirement</div>
<div class="t" style="left:1642.80px;top:187.70px;font-size:10.1px;color:#808080;font-weight:normal;">Test</div>
<div class="t" style="left:1642.80px;top:203.40px;font-size:10.1px;color:#808080;font-weight:normal;">Result</div>
<div class="t" style="left:1693.80px;top:187.70px;font-size:10.1px;color:#808080;font-weight:normal;">Status</div>
<svg style="position:absolute;left:1701.50px;top:207.00px;" width="9" height="12" viewBox="0 0 9 12"><path d="M4.5 3 V11" stroke="#7a7a7a" stroke-width="1.1" fill="none"/><path d="M1.7 4.9 L4.5 1.8 L7.3 4.9 Z" fill="#7a7a7a"/></svg>
<svg style="position:absolute;left:1221.50px;top:252.50px;" width="8" height="8" viewBox="0 0 8 8"><path d="M6.5 1.5 L6.5 6.5 L1.5 6.5 Z" fill="#999"/></svg>
<div class="t" style="left:1235.50px;top:246.90px;font-size:11.0px;color:#333;font-weight:bold;"><span style="color:#555">Portfolio: </span><span style="color:#111">US Multi-Asset I</span></div>
<div style="left:1214.4px;top:270.5px;width:546.0px;height:567.7px;overflow:hidden;">
<div style="left:23.50px;top:0.00px;width:507.60px;height:23.90px;background:#eeedfc;"></div>
<svg style="position:absolute;left:30.70px;top:8.45px;" width="9" height="9" viewBox="0 0 9 9"><path d="M0 1.2 H8.6 M0 3.4 H8.6 M0 5.6 H8.6 M0 7.8 H8.6" stroke="#666" stroke-width="1.1"/></svg>
<div class="t" style="left:47.50px;top:2.95px;font-size:9.62px;color:#606060;font-weight:normal;">% of Outstanding voting shares</div>
<div class="t" style="left:-181.70px;width:600px;text-align:right;top:2.95px;font-size:9.4px;color:#606060;font-weight:normal;">&lt; 15.00 %</div>
<div class="t" style="left:-130.00px;width:600px;text-align:right;top:2.95px;font-size:9.4px;color:#606060;font-weight:normal;">0.00 %</div>
<div class="t" style="left:474.00px;top:2.95px;font-size:8.5px;color:#444;font-weight:normal;">Pass</div>
<div style="left:23.50px;top:23.90px;width:507.60px;height:23.90px;background:#f8f8f8;"></div>
<svg style="position:absolute;left:30.70px;top:32.35px;" width="9" height="9" viewBox="0 0 9 9"><path d="M0 1.2 H8.6 M0 3.4 H8.6 M0 5.6 H8.6 M0 7.8 H8.6" stroke="#666" stroke-width="1.1"/></svg>
<div class="t" style="left:47.50px;top:26.85px;font-size:9.62px;color:#606060;font-weight:normal;">40 Act - Industry Concentration</div>
<div class="t" style="left:-181.70px;width:600px;text-align:right;top:26.85px;font-size:9.4px;color:#606060;font-weight:normal;">&lt; 25.00 %</div>
<div class="t" style="left:-130.00px;width:600px;text-align:right;top:26.85px;font-size:9.4px;color:#606060;font-weight:normal;">10.70 %</div>
<div class="t" style="left:474.00px;top:26.85px;font-size:8.5px;color:#7cbf5c;font-weight:normal;">Pass</div>
<svg style="position:absolute;left:30.70px;top:56.25px;" width="9" height="9" viewBox="0 0 9 9"><path d="M0 1.2 H8.6 M0 3.4 H8.6 M0 5.6 H8.6 M0 7.8 H8.6" stroke="#666" stroke-width="1.1"/></svg>
<div class="t" style="left:47.50px;top:50.75px;font-size:9.62px;color:#606060;font-weight:normal;">40 Act - Industry Concentration</div>
<div class="t" style="left:-181.70px;width:600px;text-align:right;top:50.75px;font-size:9.4px;color:#606060;font-weight:normal;">&lt; 20.00 %</div>
<div class="t" style="left:-130.00px;width:600px;text-align:right;top:50.75px;font-size:9.4px;color:#606060;font-weight:normal;">10.70 %</div>
<div class="t" style="left:474.00px;top:50.75px;font-size:8.5px;color:#7cbf5c;font-weight:normal;">Pass</div>
<div style="left:23.50px;top:71.70px;width:507.60px;height:23.90px;background:#f8f8f8;"></div>
<svg style="position:absolute;left:30.70px;top:80.15px;" width="9" height="9" viewBox="0 0 9 9"><path d="M0 1.2 H8.6 M0 3.4 H8.6 M0 5.6 H8.6 M0 7.8 H8.6" stroke="#666" stroke-width="1.1"/></svg>
<div class="t" style="left:47.50px;top:74.65px;font-size:9.62px;color:#606060;font-weight:normal;">40 Act - Industry Concentration</div>
<div class="t" style="left:253.00px;top:74.65px;font-size:9.3px;color:#606060;font-weight:normal;">Services: Consumer</div>
<div class="t" style="left:-181.70px;width:600px;text-align:right;top:74.65px;font-size:9.4px;color:#606060;font-weight:normal;">&lt; 25.00 %</div>
<div class="t" style="left:-130.00px;width:600px;text-align:right;top:74.65px;font-size:9.4px;color:#606060;font-weight:normal;">9.29 %</div>
<div class="t" style="left:474.00px;top:74.65px;font-size:8.5px;color:#7cbf5c;font-weight:normal;">Pass</div>
<svg style="position:absolute;left:30.70px;top:104.05px;" width="9" height="9" viewBox="0 0 9 9"><path d="M0 1.2 H8.6 M0 3.4 H8.6 M0 5.6 H8.6 M0 7.8 H8.6" stroke="#666" stroke-width="1.1"/></svg>
<div class="t" style="left:47.50px;top:98.55px;font-size:9.62px;color:#606060;font-weight:normal;">40 Act - Industry Concentration</div>
<div class="t" style="left:253.00px;top:98.55px;font-size:9.3px;color:#606060;font-weight:normal;">Services: Consumer</div>
<div class="t" style="left:-181.70px;width:600px;text-align:right;top:98.55px;font-size:9.4px;color:#606060;font-weight:normal;">&lt; 20.00 %</div>
<div class="t" style="left:-130.00px;width:600px;text-align:right;top:98.55px;font-size:9.4px;color:#606060;font-weight:normal;">9.29 %</div>
<div class="t" style="left:474.00px;top:98.55px;font-size:8.5px;color:#7cbf5c;font-weight:normal;">Pass</div>
<div style="left:23.50px;top:119.50px;width:507.60px;height:23.90px;background:#f8f8f8;"></div>
<svg style="position:absolute;left:30.70px;top:127.95px;" width="9" height="9" viewBox="0 0 9 9"><path d="M0 1.2 H8.6 M0 3.4 H8.6 M0 5.6 H8.6 M0 7.8 H8.6" stroke="#666" stroke-width="1.1"/></svg>
<div class="t" style="left:47.50px;top:122.45px;font-size:9.62px;color:#606060;font-weight:normal;">40 Act - Industry Concentration</div>
<div class="t" style="left:253.00px;top:122.45px;font-size:9.3px;color:#606060;font-weight:normal;">Energy: Oil &amp; gas</div>
<div class="t" style="left:-181.70px;width:600px;text-align:right;top:122.45px;font-size:9.4px;color:#606060;font-weight:normal;">&lt; 25.00 %</div>
<div class="t" style="left:-130.00px;width:600px;text-align:right;top:122.45px;font-size:9.4px;color:#606060;font-weight:normal;">7.94 %</div>
<div class="t" style="left:474.00px;top:122.45px;font-size:8.5px;color:#7cbf5c;font-weight:normal;">Pass</div>
<svg style="position:absolute;left:30.70px;top:151.85px;" width="9" height="9" viewBox="0 0 9 9"><path d="M0 1.2 H8.6 M0 3.4 H8.6 M0 5.6 H8.6 M0 7.8 H8.6" stroke="#666" stroke-width="1.1"/></svg>
<div class="t" style="left:47.50px;top:146.35px;font-size:9.62px;color:#606060;font-weight:normal;">40 Act - Industry Concentration</div>
<div class="t" style="left:253.00px;top:146.35px;font-size:9.3px;color:#606060;font-weight:normal;">Energy: Oil &amp; gas</div>
<div class="t" style="left:-181.70px;width:600px;text-align:right;top:146.35px;font-size:9.4px;color:#606060;font-weight:normal;">&lt; 20.00 %</div>
<div class="t" style="left:-130.00px;width:600px;text-align:right;top:146.35px;font-size:9.4px;color:#606060;font-weight:normal;">7.94 %</div>
<div class="t" style="left:474.00px;top:146.35px;font-size:8.5px;color:#7cbf5c;font-weight:normal;">Pass</div>
<div style="left:23.50px;top:167.30px;width:507.60px;height:23.90px;background:#f8f8f8;"></div>
<svg style="position:absolute;left:30.70px;top:175.75px;" width="9" height="9" viewBox="0 0 9 9"><path d="M0 1.2 H8.6 M0 3.4 H8.6 M0 5.6 H8.6 M0 7.8 H8.6" stroke="#666" stroke-width="1.1"/></svg>
<div class="t" style="left:47.50px;top:170.25px;font-size:9.62px;color:#606060;font-weight:normal;">40 Act - Industry Concentration</div>
<div class="t" style="left:253.00px;top:170.25px;font-size:9.3px;color:#606060;font-weight:normal;">Beverage, Food a...</div>
<div class="t" style="left:-181.70px;width:600px;text-align:right;top:170.25px;font-size:9.4px;color:#606060;font-weight:normal;">&lt; 25.00 %</div>
<div class="t" style="left:-130.00px;width:600px;text-align:right;top:170.25px;font-size:9.4px;color:#606060;font-weight:normal;">7.64 %</div>
<div class="t" style="left:474.00px;top:170.25px;font-size:8.5px;color:#7cbf5c;font-weight:normal;">Pass</div>
<svg style="position:absolute;left:30.70px;top:199.65px;" width="9" height="9" viewBox="0 0 9 9"><path d="M0 1.2 H8.6 M0 3.4 H8.6 M0 5.6 H8.6 M0 7.8 H8.6" stroke="#666" stroke-width="1.1"/></svg>
<div class="t" style="left:47.50px;top:194.15px;font-size:9.62px;color:#606060;font-weight:normal;">40 Act - Industry Concentration</div>
<div class="t" style="left:253.00px;top:194.15px;font-size:9.3px;color:#606060;font-weight:normal;">Beverage, Food a...</div>
<div class="t" style="left:-181.70px;width:600px;text-align:right;top:194.15px;font-size:9.4px;color:#606060;font-weight:normal;">&lt; 20.00 %</div>
<div class="t" style="left:-130.00px;width:600px;text-align:right;top:194.15px;font-size:9.4px;color:#606060;font-weight:normal;">7.64 %</div>
<div class="t" style="left:474.00px;top:194.15px;font-size:8.5px;color:#7cbf5c;font-weight:normal;">Pass</div>
<div style="left:23.50px;top:215.10px;width:507.60px;height:23.90px;background:#f8f8f8;"></div>
<svg style="position:absolute;left:30.70px;top:223.55px;" width="9" height="9" viewBox="0 0 9 9"><path d="M0 1.2 H8.6 M0 3.4 H8.6 M0 5.6 H8.6 M0 7.8 H8.6" stroke="#666" stroke-width="1.1"/></svg>
<div class="t" style="left:47.50px;top:218.05px;font-size:9.62px;color:#606060;font-weight:normal;">40 Act - Industry Concentration</div>
<div class="t" style="left:253.00px;top:218.05px;font-size:9.3px;color:#606060;font-weight:normal;">Transportation: C...</div>
<div class="t" style="left:-181.70px;width:600px;text-align:right;top:218.05px;font-size:9.4px;color:#606060;font-weight:normal;">&lt; 25.00 %</div>
<div class="t" style="left:-130.00px;width:600px;text-align:right;top:218.05px;font-size:9.4px;color:#606060;font-weight:normal;">7.32 %</div>
<div class="t" style="left:474.00px;top:218.05px;font-size:8.5px;color:#7cbf5c;font-weight:normal;">Pass</div>
<svg style="position:absolute;left:30.70px;top:247.45px;" width="9" height="9" viewBox="0 0 9 9"><path d="M0 1.2 H8.6 M0 3.4 H8.6 M0 5.6 H8.6 M0 7.8 H8.6" stroke="#666" stroke-width="1.1"/></svg>
<div class="t" style="left:47.50px;top:241.95px;font-size:9.62px;color:#606060;font-weight:normal;">40 Act - Industry Concentration</div>
<div class="t" style="left:253.00px;top:241.95px;font-size:9.3px;color:#606060;font-weight:normal;">Transportation: C...</div>
<div class="t" style="left:-181.70px;width:600px;text-align:right;top:241.95px;font-size:9.4px;color:#606060;font-weight:normal;">&lt; 20.00 %</div>
<div class="t" style="left:-130.00px;width:600px;text-align:right;top:241.95px;font-size:9.4px;color:#606060;font-weight:normal;">7.32 %</div>
<div class="t" style="left:474.00px;top:241.95px;font-size:8.5px;color:#7cbf5c;font-weight:normal;">Pass</div>
<div style="left:23.50px;top:262.90px;width:507.60px;height:23.90px;background:#f8f8f8;"></div>
<svg style="position:absolute;left:30.70px;top:271.35px;" width="9" height="9" viewBox="0 0 9 9"><path d="M0 1.2 H8.6 M0 3.4 H8.6 M0 5.6 H8.6 M0 7.8 H8.6" stroke="#666" stroke-width="1.1"/></svg>
<div class="t" style="left:47.50px;top:265.85px;font-size:9.62px;color:#606060;font-weight:normal;">40 Act - Sector Concentration</div>
<div class="t" style="left:-181.70px;width:600px;text-align:right;top:265.85px;font-size:9.4px;color:#606060;font-weight:normal;">&lt; 25.00 %</div>
<div class="t" style="left:-130.00px;width:600px;text-align:right;top:265.85px;font-size:9.4px;color:#606060;font-weight:normal;">0.00 %</div>
<div class="t" style="left:474.00px;top:265.85px;font-size:8.5px;color:#7cbf5c;font-weight:normal;">Pass</div>
<svg style="position:absolute;left:30.70px;top:295.25px;" width="9" height="9" viewBox="0 0 9 9"><path d="M0 1.2 H8.6 M0 3.4 H8.6 M0 5.6 H8.6 M0 7.8 H8.6" stroke="#666" stroke-width="1.1"/></svg>
<div class="t" style="left:47.50px;top:289.75px;font-size:9.62px;color:#606060;font-weight:normal;">40 Act - Sector Concentration</div>
<div class="t" style="left:-181.70px;width:600px;text-align:right;top:289.75px;font-size:9.4px;color:#606060;font-weight:normal;">&lt; 20.00 %</div>
<div class="t" style="left:-130.00px;width:600px;text-align:right;top:289.75px;font-size:9.4px;color:#606060;font-weight:normal;">0.00 %</div>
<div class="t" style="left:474.00px;top:289.75px;font-size:8.5px;color:#7cbf5c;font-weight:normal;">Pass</div>
<div style="left:23.50px;top:310.70px;width:507.60px;height:23.90px;background:#f8f8f8;"></div>
<svg style="position:absolute;left:30.70px;top:319.15px;" width="9" height="9" viewBox="0 0 9 9"><path d="M0 1.2 H8.6 M0 3.4 H8.6 M0 5.6 H8.6 M0 7.8 H8.6" stroke="#666" stroke-width="1.1"/></svg>
<div class="t" style="left:47.50px;top:313.65px;font-size:9.62px;color:#606060;font-weight:normal;">40 Act - Total Assets in any Investment Comp...</div>
<div class="t" style="left:-181.70px;width:600px;text-align:right;top:313.65px;font-size:9.4px;color:#606060;font-weight:normal;">&lt; 10.00 %</div>
<div class="t" style="left:-130.00px;width:600px;text-align:right;top:313.65px;font-size:9.4px;color:#606060;font-weight:normal;">6.94 %</div>
<div class="t" style="left:474.00px;top:313.65px;font-size:8.5px;color:#7cbf5c;font-weight:normal;">Pass</div>
<svg style="position:absolute;left:30.70px;top:343.05px;" width="9" height="9" viewBox="0 0 9 9"><path d="M0 1.2 H8.6 M0 3.4 H8.6 M0 5.6 H8.6 M0 7.8 H8.6" stroke="#666" stroke-width="1.1"/></svg>
<div class="t" style="left:47.50px;top:337.55px;font-size:9.62px;color:#606060;font-weight:normal;">40 Act - Total Assets in any Investment Comp...</div>
<div class="t" style="left:253.00px;top:337.55px;font-size:9.3px;color:#606060;font-weight:normal;">Texas State Univer...</div>
<div class="t" style="left:-181.70px;width:600px;text-align:right;top:337.55px;font-size:9.4px;color:#606060;font-weight:normal;">&lt; 5.00 %</div>
<div class="t" style="left:-130.00px;width:600px;text-align:right;top:337.55px;font-size:9.4px;color:#606060;font-weight:normal;">1.99 %</div>
<div class="t" style="left:474.00px;top:337.55px;font-size:8.5px;color:#7cbf5c;font-weight:normal;">Pass</div>
<div style="left:23.50px;top:358.50px;width:507.60px;height:23.90px;background:#f8f8f8;"></div>
<svg style="position:absolute;left:30.70px;top:366.95px;" width="9" height="9" viewBox="0 0 9 9"><path d="M0 1.2 H8.6 M0 3.4 H8.6 M0 5.6 H8.6 M0 7.8 H8.6" stroke="#666" stroke-width="1.1"/></svg>
<div class="t" style="left:47.50px;top:361.45px;font-size:9.62px;color:#606060;font-weight:normal;">40 Act - Total Assets in any Investment Comp...</div>
<div class="t" style="left:253.00px;top:361.45px;font-size:9.3px;color:#606060;font-weight:normal;">San Francisco Uni...</div>
<div class="t" style="left:-181.70px;width:600px;text-align:right;top:361.45px;font-size:9.4px;color:#606060;font-weight:normal;">&lt; 5.00 %</div>
<div class="t" style="left:-130.00px;width:600px;text-align:right;top:361.45px;font-size:9.4px;color:#606060;font-weight:normal;">1.98 %</div>
<div class="t" style="left:474.00px;top:361.45px;font-size:8.5px;color:#7cbf5c;font-weight:normal;">Pass</div>
<svg style="position:absolute;left:30.70px;top:390.85px;" width="9" height="9" viewBox="0 0 9 9"><path d="M0 1.2 H8.6 M0 3.4 H8.6 M0 5.6 H8.6 M0 7.8 H8.6" stroke="#666" stroke-width="1.1"/></svg>
<div class="t" style="left:47.50px;top:385.35px;font-size:9.62px;color:#606060;font-weight:normal;">40 Act - Total Assets in any Investment Comp...</div>
<div class="t" style="left:253.00px;top:385.35px;font-size:9.3px;color:#606060;font-weight:normal;">Gallatin CLO III 20...</div>
<div class="t" style="left:-181.70px;width:600px;text-align:right;top:385.35px;font-size:9.4px;color:#606060;font-weight:normal;">&lt; 5.00 %</div>
<div class="t" style="left:-130.00px;width:600px;text-align:right;top:385.35px;font-size:9.4px;color:#606060;font-weight:normal;">0.79 %</div>
<div class="t" style="left:474.00px;top:385.35px;font-size:8.5px;color:#7cbf5c;font-weight:normal;">Pass</div>
<div style="left:23.50px;top:406.30px;width:507.60px;height:23.90px;background:#f8f8f8;"></div>
<svg style="position:absolute;left:30.70px;top:414.75px;" width="9" height="9" viewBox="0 0 9 9"><path d="M0 1.2 H8.6 M0 3.4 H8.6 M0 5.6 H8.6 M0 7.8 H8.6" stroke="#666" stroke-width="1.1"/></svg>
<div class="t" style="left:47.50px;top:409.25px;font-size:9.62px;color:#606060;font-weight:normal;">40 Act - Total Assets in any Investment Comp...</div>
<div class="t" style="left:253.00px;top:409.25px;font-size:9.3px;color:#606060;font-weight:normal;">General Motors Fi...</div>
<div class="t" style="left:-181.70px;width:600px;text-align:right;top:409.25px;font-size:9.4px;color:#606060;font-weight:normal;">&lt; 5.00 %</div>
<div class="t" style="left:-130.00px;width:600px;text-align:right;top:409.25px;font-size:9.4px;color:#606060;font-weight:normal;">0.72 %</div>
<div class="t" style="left:474.00px;top:409.25px;font-size:8.5px;color:#7cbf5c;font-weight:normal;">Pass</div>
<svg style="position:absolute;left:30.70px;top:438.65px;" width="9" height="9" viewBox="0 0 9 9"><path d="M0 1.2 H8.6 M0 3.4 H8.6 M0 5.6 H8.6 M0 7.8 H8.6" stroke="#666" stroke-width="1.1"/></svg>
<div class="t" style="left:47.50px;top:433.15px;font-size:9.62px;color:#606060;font-weight:normal;">40 Act - Total Assets in any Investment Comp...</div>
<div class="t" style="left:253.00px;top:433.15px;font-size:9.3px;color:#606060;font-weight:normal;">Home Loan Servic...</div>
<div class="t" style="left:-181.70px;width:600px;text-align:right;top:433.15px;font-size:9.4px;color:#606060;font-weight:normal;">&lt; 5.00 %</div>
<div class="t" style="left:-130.00px;width:600px;text-align:right;top:433.15px;font-size:9.4px;color:#606060;font-weight:normal;">0.52 %</div>
<div class="t" style="left:474.00px;top:433.15px;font-size:8.5px;color:#7cbf5c;font-weight:normal;">Pass</div>
<div style="left:23.50px;top:454.10px;width:507.60px;height:23.90px;background:#f8f8f8;"></div>
<svg style="position:absolute;left:30.70px;top:462.55px;" width="9" height="9" viewBox="0 0 9 9"><path d="M0 1.2 H8.6 M0 3.4 H8.6 M0 5.6 H8.6 M0 7.8 H8.6" stroke="#666" stroke-width="1.1"/></svg>
<div class="t" style="left:47.50px;top:457.05px;font-size:9.62px;color:#606060;font-weight:normal;">40 Act - Total Debt Outstanding of Any Secur...</div>
<div class="t" style="left:253.00px;top:457.05px;font-size:9.3px;color:#606060;font-weight:normal;">Consolidated Ene...</div>
<div class="t" style="left:-181.70px;width:600px;text-align:right;top:457.05px;font-size:9.4px;color:#606060;font-weight:normal;">&lt; 10.00 %</div>
<div class="t" style="left:-130.00px;width:600px;text-align:right;top:457.05px;font-size:9.4px;color:#606060;font-weight:normal;">0.00 %</div>
<div class="t" style="left:474.00px;top:457.05px;font-size:8.5px;color:#7cbf5c;font-weight:normal;">Pass</div>
<svg style="position:absolute;left:30.70px;top:486.45px;" width="9" height="9" viewBox="0 0 9 9"><path d="M0 1.2 H8.6 M0 3.4 H8.6 M0 5.6 H8.6 M0 7.8 H8.6" stroke="#666" stroke-width="1.1"/></svg>
<div class="t" style="left:47.50px;top:480.95px;font-size:9.62px;color:#606060;font-weight:normal;">40 Act - Total Debt Outstanding of Any Secur...</div>
<div class="t" style="left:253.00px;top:480.95px;font-size:9.3px;color:#606060;font-weight:normal;">MSCI, Inc.</div>
<div class="t" style="left:-181.70px;width:600px;text-align:right;top:480.95px;font-size:9.4px;color:#606060;font-weight:normal;">&lt; 10.00 %</div>
<div class="t" style="left:-130.00px;width:600px;text-align:right;top:480.95px;font-size:9.4px;color:#606060;font-weight:normal;">0.00 %</div>
<div class="t" style="left:474.00px;top:480.95px;font-size:8.5px;color:#7cbf5c;font-weight:normal;">Pass</div>
<div style="left:23.50px;top:501.90px;width:507.60px;height:23.90px;background:#f8f8f8;"></div>
<svg style="position:absolute;left:30.70px;top:510.35px;" width="9" height="9" viewBox="0 0 9 9"><path d="M0 1.2 H8.6 M0 3.4 H8.6 M0 5.6 H8.6 M0 7.8 H8.6" stroke="#666" stroke-width="1.1"/></svg>
<div class="t" style="left:47.50px;top:504.85px;font-size:9.62px;color:#606060;font-weight:normal;">40 Act - Total Debt Outstanding of Any Secur...</div>
<div class="t" style="left:253.00px;top:504.85px;font-size:9.3px;color:#606060;font-weight:normal;">Jefferies Finance L...</div>
<div class="t" style="left:-181.70px;width:600px;text-align:right;top:504.85px;font-size:9.4px;color:#606060;font-weight:normal;">&lt; 10.00 %</div>
<div class="t" style="left:-130.00px;width:600px;text-align:right;top:504.85px;font-size:9.4px;color:#606060;font-weight:normal;">0.00 %</div>
<div class="t" style="left:474.00px;top:504.85px;font-size:8.5px;color:#7cbf5c;font-weight:normal;">Pass</div>
<svg style="position:absolute;left:30.70px;top:534.25px;" width="9" height="9" viewBox="0 0 9 9"><path d="M0 1.2 H8.6 M0 3.4 H8.6 M0 5.6 H8.6 M0 7.8 H8.6" stroke="#666" stroke-width="1.1"/></svg>
<div class="t" style="left:47.50px;top:528.75px;font-size:9.62px;color:#606060;font-weight:normal;">40 Act - Total Debt Outstanding of Any Secur...</div>
<div class="t" style="left:253.00px;top:528.75px;font-size:9.3px;color:#606060;font-weight:normal;">Ship Luxco 3 S.a.r....</div>
<div class="t" style="left:-181.70px;width:600px;text-align:right;top:528.75px;font-size:9.4px;color:#606060;font-weight:normal;">&lt; 10.00 %</div>
<div class="t" style="left:-130.00px;width:600px;text-align:right;top:528.75px;font-size:9.4px;color:#606060;font-weight:normal;">0.00 %</div>
<div class="t" style="left:474.00px;top:528.75px;font-size:8.5px;color:#7cbf5c;font-weight:normal;">Pass</div>
<div style="left:23.50px;top:549.70px;width:507.60px;height:23.90px;background:#f8f8f8;"></div>
<svg style="position:absolute;left:30.70px;top:558.15px;" width="9" height="9" viewBox="0 0 9 9"><path d="M0 1.2 H8.6 M0 3.4 H8.6 M0 5.6 H8.6 M0 7.8 H8.6" stroke="#666" stroke-width="1.1"/></svg>
<div class="t" style="left:47.50px;top:552.65px;font-size:9.62px;color:#606060;font-weight:normal;">40 Act - Total Debt Outstanding of Any Secur...</div>
<div class="t" style="left:253.00px;top:552.65px;font-size:9.3px;color:#606060;font-weight:normal;">Duff &amp; Phelps, LLC</div>
<div class="t" style="left:-181.70px;width:600px;text-align:right;top:552.65px;font-size:9.4px;color:#606060;font-weight:normal;">&lt; 10.00 %</div>
<div class="t" style="left:-130.00px;width:600px;text-align:right;top:552.65px;font-size:9.4px;color:#606060;font-weight:normal;">0.00 %</div>
<div class="t" style="left:474.00px;top:552.65px;font-size:8.5px;color:#7cbf5c;font-weight:normal;">Pass</div>
</div>
<div style="left:1214.40px;top:838.20px;width:546.00px;height:1.00px;background:#e8e8e8;"></div>
<div style="left:1238.20px;top:839.20px;width:522.20px;height:18.00px;background:#f3f3f3;"></div>
<div style="left:1745.80px;top:839.20px;width:1.00px;height:18.00px;background:#e4e4e4;"></div>
</div></div>
</body></html>
